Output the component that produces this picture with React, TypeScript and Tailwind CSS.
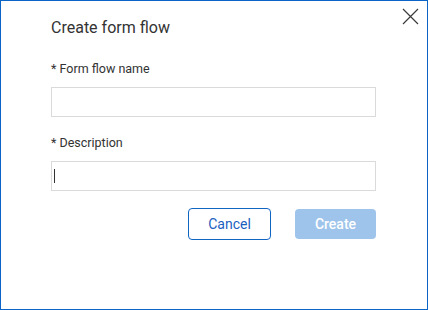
import React from "react";

export default function App() {
  return (
    <div
      className="relative w-[428px] h-[310px] bg-white border border-[#0b64c6] box-border"
      style={{ fontFamily: "Roboto, 'Liberation Sans', sans-serif" }}
    >
      <button className="absolute right-[8px] top-[7px] w-[17px] h-[17px] flex items-center justify-center">
        <svg width="17" height="17" viewBox="0 0 17 17">
          <path d="M1 1 L16 16 M16 1 L1 16" stroke="#3a3a3a" strokeWidth="1.2" fill="none" />
        </svg>
      </button>
      <div className="pl-[50px] pr-[51px] pt-[17px] flex flex-col">
        <div className="text-[16px] leading-[20px] text-[#333333]">Create form flow</div>
        <div className="mt-[23px] text-[12.5px] leading-[16px] text-[#333333]">* Form flow name</div>
        <div className="mt-[10px] h-[30px] border border-[#dadada] bg-white" />
        <div className="mt-[18px] text-[12.5px] leading-[16px] text-[#333333]">* Description</div>
        <div className="mt-[10px] h-[30px] border border-[#dadada] bg-white flex items-center pl-[2px]">
          <div className="w-px h-[14px] bg-[#333]" />
        </div>
        <div className="mt-[17px] flex justify-end items-center gap-[24px]">
          <button className="w-[83px] h-[32px] rounded-[4px] border border-[#1064c4] text-[#1a5fbf] text-[14px]">
            Cancel
          </button>
          <button className="w-[81px] h-[30px] rounded-[4px] bg-[#9ec4eb] text-white text-[14px] font-medium">
            Create
          </button>
        </div>
      </div>
    </div>
  );
}
